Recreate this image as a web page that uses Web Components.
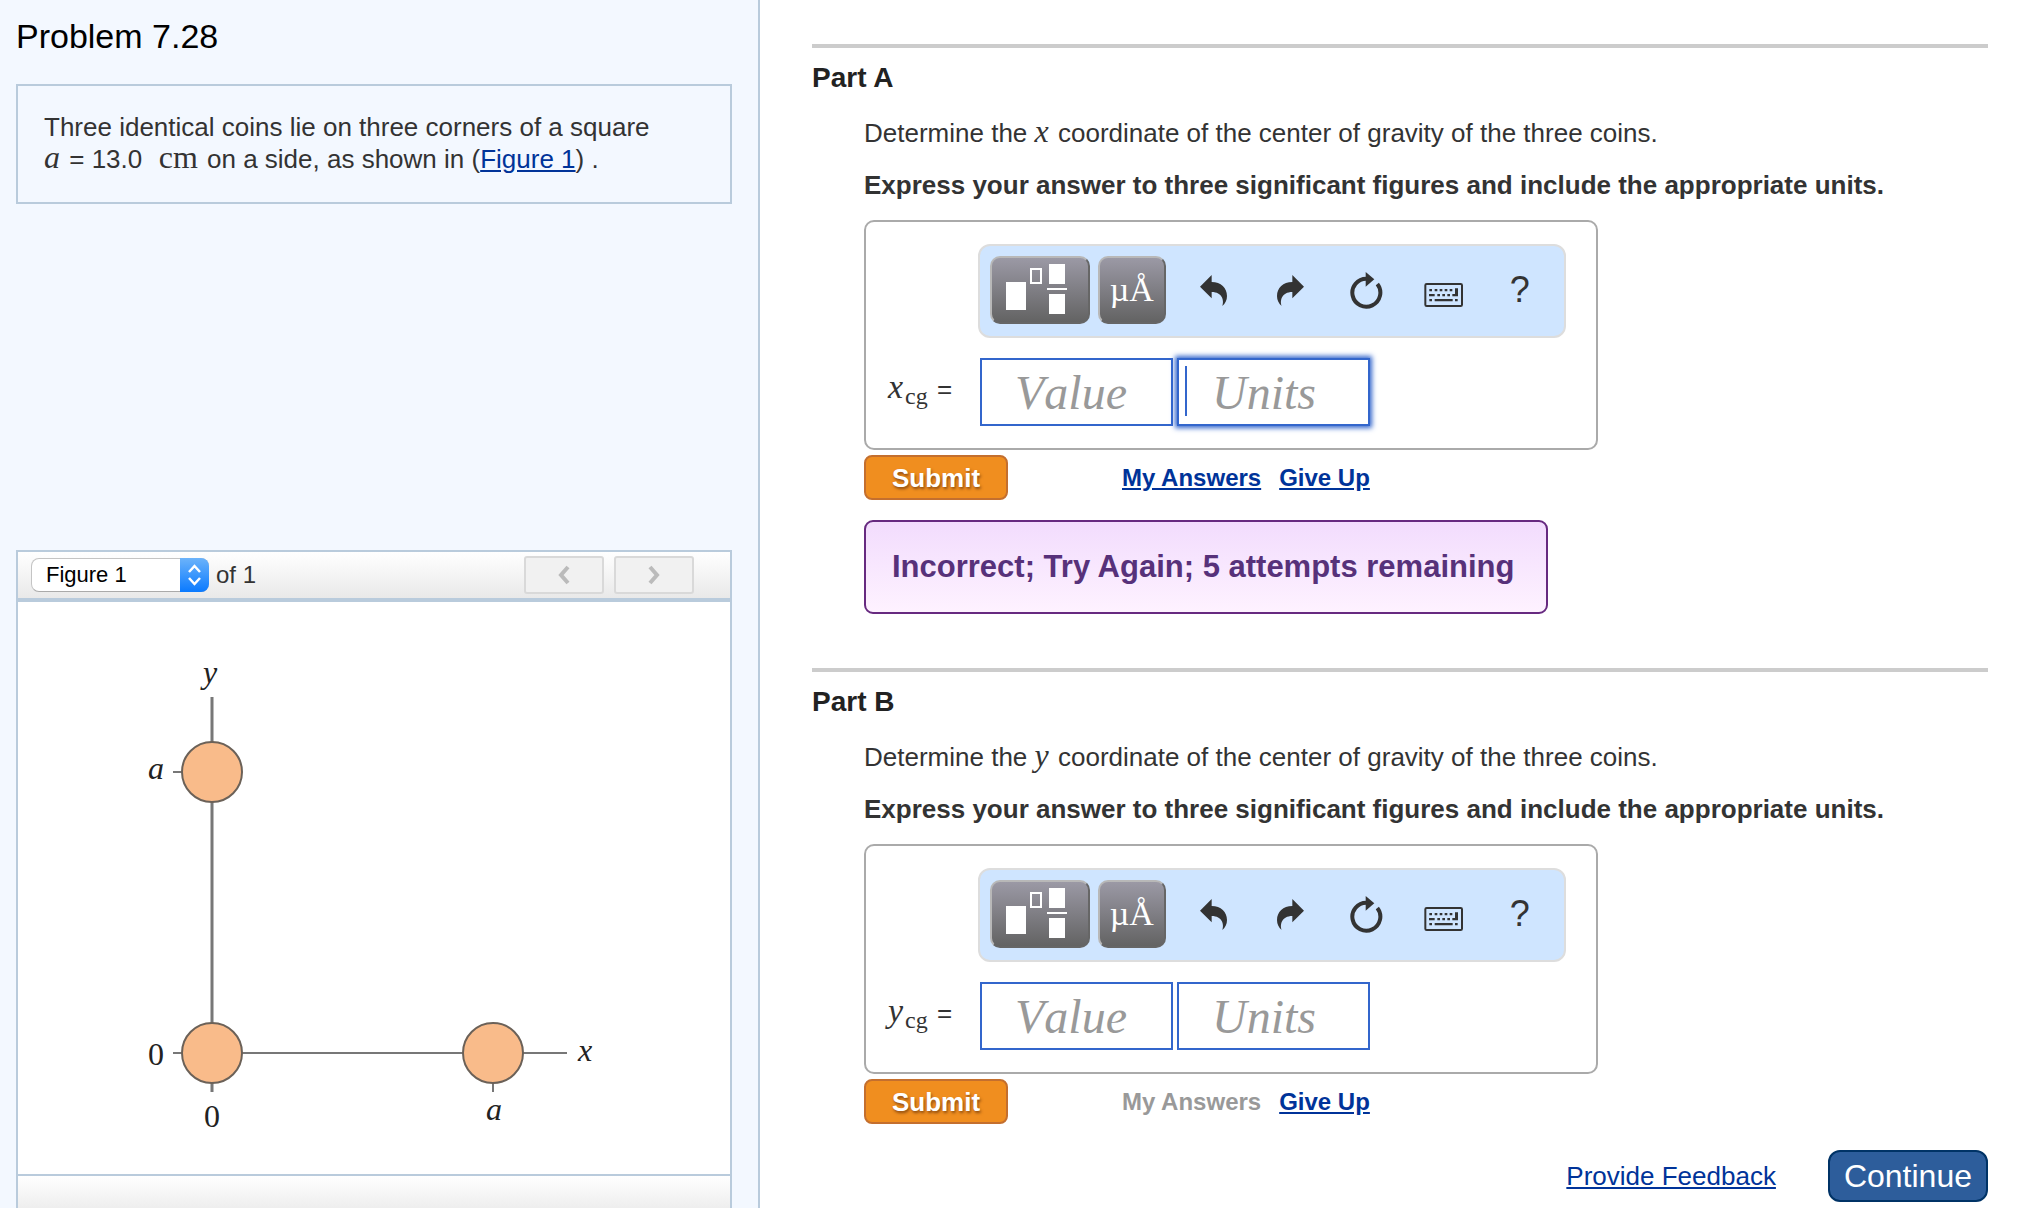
<!DOCTYPE html>
<html lang="en">
<head>
<meta charset="utf-8">
<title>Problem 7.28</title>
<style>
    body {
        margin: 0;
        background: #fff;
        color: #333;
        font: 26px/32px "Liberation Sans", Arial, sans-serif;
    }
    a { color: #003399; }
    var, .unit { font-family: "Liberation Serif", "Times New Roman", serif; font-size: 32px; line-height: 1px; }
    var { margin-right: 2px; }
    .unit { margin: 0 2px; }
</style>
</head>
<body>

<problem-page>
    <problem-statement slot="side" heading="Problem 7.28">
        Three identical coins lie on three corners of a square <var>a</var> = 13.0&nbsp; <span class="unit">cm</span> on a side, as shown in (<a href="#figure-1">Figure 1</a>) .
    </problem-statement>
    <figure-viewer slot="side" id="figure-1"></figure-viewer>

    <problem-part heading="Part A" symbol="x" focused="units" answered>
        <span slot="prompt">Determine the <var>x</var> coordinate of the center of gravity of the three coins.</span>
        <span slot="instruction">Express your answer to three significant figures and include the appropriate units.</span>
        <attempt-feedback>Incorrect; Try Again; 5 attempts remaining</attempt-feedback>
    </problem-part>
    <problem-part heading="Part B" symbol="y">
        <span slot="prompt">Determine the <var>y</var> coordinate of the center of gravity of the three coins.</span>
        <span slot="instruction">Express your answer to three significant figures and include the appropriate units.</span>
    </problem-part>
    <page-actions slot="footer"></page-actions>
</problem-page>

<script>
// --- 1. HELPERS ---

function define(name, render, after) {
    customElements.define(name, class extends HTMLElement {
        connectedCallback() {
            if (this.shadowRoot) return;
            this.attachShadow({ mode: 'open' }).innerHTML = render(this);
            if (after) after(this.shadowRoot, this);
        }
    });
}

const icons = {
    undo: `<svg width="30" height="33" viewBox="0 0 90 99"><path fill="#333" d="M3 38L38 3V24C66 24 84 42 84 66C84 78 79 89 70 96C76 80 70 54 38 54V73Z"/></svg>`,
    redo: `<svg width="30" height="33" viewBox="0 0 90 99"><path fill="#333" d="M87 38L52 3V24C24 24 6 42 6 66C6 78 11 89 20 96C14 80 20 54 52 54V73Z"/></svg>`,
    reset: `<svg width="33" height="37" viewBox="0 0 99 111"><path fill="none" stroke="#333" stroke-width="12" d="M82 36A42 42 0 1 1 50 20"/><path fill="#333" d="M47 0L73 22L47 44Z"/></svg>`,
    keyboard: `<svg width="39" height="34" viewBox="0 -30 117 102">
        <rect x="4" y="3" width="110" height="66" rx="4" fill="none" stroke="#333" stroke-width="6"/>
        <path fill="#333" d="M16 18h8v7h-8zM32 18h8v7h-8zM47 18h8v7h-8zM62 18h8v7h-8zM77 18h8v7h-8zM93 16h9v24h-17v-7h8zM15 33h17v7h-17zM40 33h8v7h-8zM55 33h8v7h-8zM70 33h8v7h-8zM16 48h8v7h-8zM32 48h54v7h-54zM93 48h8v7h-8z"/></svg>`,
    template: `<svg width="96" height="64" viewBox="0 0 96 64" fill="#fff">
        <rect x="14" y="24" width="20" height="28"/>
        <path fill="none" stroke="#fff" stroke-width="2" d="M39 11h10v14h-10z"/>
        <rect x="57" y="6" width="16" height="20"/><rect x="55" y="30" width="20" height="2"/><rect x="57" y="36" width="16" height="20"/></svg>`
};

const chevron = points => `<svg width="14" height="20" viewBox="0 0 14 20"><polyline points="${points}" fill="none" stroke="#bbb" stroke-width="4"/></svg>`;


// --- 2. PAGE FRAME ---

define('problem-page', () => `
    <style>
        :host { display: flex; min-height: 100vh; }
        aside {
            flex: 0 1 760px; box-sizing: border-box; min-width: 0;
            display: flex; flex-direction: column; justify-content: space-between;
            padding: 12px 26px 0 16px;
            border-right: 2px solid #b9cbdc; background: #f3f8ff;
        }
        main {
            flex: 1; min-width: 0; box-sizing: border-box;
            display: flex; flex-direction: column;
            padding: 44px 32px 6px 52px;
        }
        footer { margin-top: auto; }
    </style>
    <aside><slot name="side"></slot></aside>
    <main><slot></slot><footer><slot name="footer"></slot></footer></main>`);

define('problem-statement', el => `
    <style>
        :host { display: block; }
        h1 { margin: 0 0 24px; color: #000; font-size: 34px; font-weight: normal; line-height: 48px; }
        p { margin: 0; padding: 25px 60px 27px 26px; border: 2px solid #b9cbdc; }
    </style>
    <h1>${el.getAttribute('heading')}</h1>
    <p><slot></slot></p>`);

define('page-actions', () => `
    <style>
        :host { display: flex; justify-content: flex-end; align-items: center; gap: 52px; }
        a { color: #003399; }
        button {
            height: 52px; padding: 0 14px;
            border: 2px solid #003366; border-radius: 12px;
            background: #2d5d9b; color: #fff; font: inherit; font-size: 32px;
        }
    </style>
    <a href="#feedback">Provide Feedback</a>
    <button type="button">Continue</button>`);


// --- 3. FIGURE ---

define('figure-viewer', () => `
    <style>
        :host { display: block; border: 2px solid #b9cbdc; border-bottom: 0; background: #fff; }
        .bar {
            display: flex; align-items: center; height: 46px; padding: 0 36px 0 13px;
            background: linear-gradient(#fff, #e9e9e9); border-bottom: 4px solid #b9cbdc;
            font-size: 24px;
        }
        .picker { position: relative; display: flex; margin-right: 7px; }
        select {
            appearance: none; box-sizing: border-box; width: 178px; height: 34px; padding: 0 36px 0 14px;
            border: 1px solid #c4c4c4; border-bottom-color: #aaa; border-radius: 8px;
            background: #fff; color: #000; font: inherit; font-size: 22px;
        }
        .picker svg { position: absolute; right: 0; top: 0; pointer-events: none; }
        .nav { display: flex; gap: 10px; margin-left: auto; }
        .nav button {
            display: flex; align-items: center; justify-content: center;
            width: 80px; height: 38px; padding: 0;
            border: 2px solid #d9d9d9; border-radius: 3px; background: #f1f1f1;
        }
        .drawing { display: block; width: 100%; height: auto; }
        text { font: 32px "Liberation Serif", "Times New Roman", serif; fill: #222; text-anchor: middle; }
        .i { font-style: italic; }
        .foot { height: 32px; border-top: 2px solid #b9cbdc; background: linear-gradient(#fff, #eee); }
    </style>
    <div class="bar">
        <span class="picker">
            <select id="pick" aria-label="Figure"><option>Figure 1</option></select>
            <svg width="29" height="34" viewBox="0 0 29 34">
                <defs><linearGradient id="blue" x2="0" y2="1"><stop stop-color="#6cb3fa"/><stop offset="1" stop-color="#0a7aff"/></linearGradient></defs>
                <path fill="url(#blue)" d="M0 0H21A8 8 0 0 1 29 8V26A8 8 0 0 1 21 34H0Z"/>
                <path fill="none" stroke="#fff" stroke-width="2.5" d="M9 14L14.500 8L20 14M9 20L14.500 26L20 20"/>
            </svg>
        </span>
        <label for="pick">of 1</label>
        <span class="nav">
            <button type="button" disabled aria-label="Previous figure">${chevron('11,2 4,10 11,18')}</button>
            <button type="button" disabled aria-label="Next figure">${chevron('3,2 10,10 3,18')}</button>
        </span>
    </div>
    <svg class="drawing" viewBox="0 0 712 572" role="img" aria-label="Coins at three corners of a square">
        <g stroke="#777" fill="none">
            <path stroke-width="3" d="M194 95V490"/>
            <path stroke-width="2" d="M155 170H194M155 451H549M475 451V490"/>
        </g>
        <g fill="#f9bb8a" stroke="#6b6158" stroke-width="2">
            <circle cx="194" cy="170" r="30"/><circle cx="194" cy="451" r="30"/><circle cx="475" cy="451" r="30"/>
        </g>
        <text class="i" x="192" y="81">y</text>
        <text class="i" x="138" y="177">a</text>
        <text x="138" y="463">0</text>
        <text x="194" y="525">0</text>
        <text class="i" x="476" y="518">a</text>
        <text class="i" x="567" y="459">x</text>
    </svg>
    <div class="foot"></div>`);


// --- 4. PARTS & ANSWER EDITOR ---

define('problem-part', el => `
    <style>
        :host { display: block; border-top: 4px solid #ccc; }
        h2 { margin: 14px 0 23px; color: #222; font-size: 28px; line-height: 32px; }
        .body { padding-left: 52px; }
        p { margin: 0 0 20px; }
        p.instruction { margin-bottom: 19px; font-weight: bold; }
        .actions { display: flex; align-items: center; gap: 18px; margin-top: 5px; font-size: 24px; font-weight: bold; }
        .submit {
            box-sizing: border-box; width: 144px; height: 45px; margin-right: 96px; padding: 0;
            border: 2px solid #c46f2e; border-radius: 8px;
            background: #f08e1f; color: #fff; font: inherit; font-size: 26px;
            text-shadow: 1px 2px 3px #8a4a10;
        }
        a { color: #003399; }
        .off { color: #999; }
    </style>
    <h2>${el.getAttribute('heading')}</h2>
    <div class="body">
        <p><slot name="prompt"></slot></p>
        <p class="instruction"><slot name="instruction"></slot></p>
        <answer-editor symbol="${el.getAttribute('symbol')}" focused="${el.getAttribute('focused') || ''}"></answer-editor>
        <div class="actions">
            <button type="button" class="submit">Submit</button>
            ${el.hasAttribute('answered') ? '<a href="#answers">My Answers</a>' : '<span class="off">My Answers</span>'}
            <a href="#give-up">Give Up</a>
        </div>
        <slot></slot>
    </div>`);

define('attempt-feedback', () => `
    <style>
        :host {
            display: block; box-sizing: border-box; width: fit-content;
            margin: 20px 0 54px; padding: 27px 32px 27px 26px;
            border: 2px solid #672a80; border-radius: 9px;
            background: linear-gradient(#f2dcfd, #fef2ff);
            color: #57317a; font-size: 31px; font-weight: bold; line-height: 36px;
        }
    </style>
    <slot></slot>`);

define('answer-editor', el => `
    <style>
        :host {
            display: grid; grid-template-columns: 90px auto; row-gap: 20px;
            box-sizing: border-box; width: fit-content; padding: 22px 30px 22px 22px;
            border: 2px solid #aaa; border-radius: 10px; background: #fff;
        }
        math-toolbar { grid-column: 2; }
        label { align-self: center; padding-bottom: 6px; white-space: nowrap; }
        i, sub { font-family: "Liberation Serif", "Times New Roman", serif; line-height: 1px; }
        i { margin-right: 2px; font-size: 34px; }
        sub { margin-right: 2px; font-size: 24px; vertical-align: -6px; }
        .fields { display: flex; gap: 4px; padding-left: 2px; }
        .field { position: relative; display: flex; }
        input {
            box-sizing: border-box; width: 193px; height: 68px; padding: 0 10px 0 33px;
            border: 2px solid #3366cc; border-radius: 0; outline: 0; background: #fff; color: #333;
            font: italic 48px "Liberation Serif", "Times New Roman", serif; font-kerning: none;
        }
        input::placeholder { color: #999; opacity: 1; }
        .focused input { box-shadow: 0 0 5px 2px #3366cc; }
        .focused::after { content: ""; position: absolute; left: 8px; top: 8px; width: 2px; height: 50px; background: #3366cc; }
    </style>
    <math-toolbar></math-toolbar>
    <label for="value"><i>${el.getAttribute('symbol')}</i><sub>cg</sub> =</label>
    <div class="fields">
        <span class="field" data-field="value"><input id="value" type="text" placeholder="Value"></span>
        <span class="field" data-field="units"><input type="text" placeholder="Units" aria-label="Units"></span>
    </div>`,
    (root, el) => {
        root.querySelectorAll('.field').forEach(field => {
            field.classList.toggle('focused', field.dataset.field === el.getAttribute('focused'));
        });
    });

define('math-toolbar', () => `
    <style>
        :host {
            display: flex; gap: 8px; box-sizing: border-box; width: 588px; padding: 10px 10px 12px;
            border: 2px solid #ddd; border-radius: 12px; background: #cfe5ff;
        }
        button { display: flex; align-items: center; justify-content: center; box-sizing: border-box; width: 69px; height: 68px; padding: 0; border: 0; background: none; color: #333; font: inherit; }
        .menu {
            width: 68px; border: 2px solid #666; border-top-color: #b8b8b8; border-left-color: #b8b8b8; border-radius: 10px;
            background: linear-gradient(#9b99a5, #636363);
            color: #fff; font: 34px "Liberation Serif", "Times New Roman", serif;
        }
        .wide { width: 100px; }
        .menu + .tool { margin-left: 6px; }
        .help { font-size: 36px; }
    </style>
    <button type="button" class="menu wide" aria-label="Templates">${icons.template}</button>
    <button type="button" class="menu">µÅ</button>
    <button type="button" class="tool" aria-label="Undo">${icons.undo}</button>
    <button type="button" class="tool" aria-label="Redo">${icons.redo}</button>
    <button type="button" class="tool" aria-label="Reset">${icons.reset}</button>
    <button type="button" class="tool" aria-label="Keyboard">${icons.keyboard}</button>
    <button type="button" class="tool help">?</button>`);
</script>
</body>
</html>
